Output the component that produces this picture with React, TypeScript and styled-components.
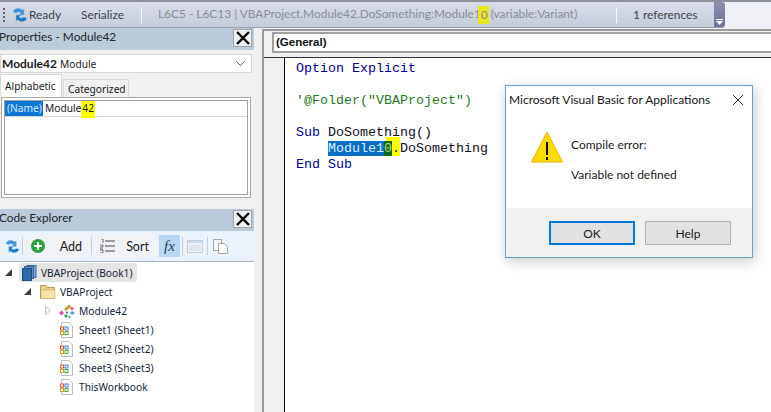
import React from 'react';
import styled, { createGlobalStyle } from 'styled-components';

const Global = createGlobalStyle`
  html, body { margin: 0; padding: 0; background: #f0f0f0; }
  * { box-sizing: border-box; }
`;
const Page = styled.div`
  position: relative; width: 771px; height: 412px; overflow: hidden;
  display: flex; flex-direction: column; background: #f0f0f0;
  font-family: Lato, "Noto Sans", sans-serif; font-size: 12px; color: #1a1a1a;
`;
const TopStrip = styled.div`
  height: 28px; flex: none; display: flex; background: #eef0f6;
  border-top: 2px solid #8d9099;
`;
const Toolbar = styled.div`
  width: 725px; display: flex; align-items: center; position: relative; font-size: 11.9px;
  background: linear-gradient(#d9deea, #cdd3e0 60%, #c6cdda);
  border-bottom: 1px solid #9aa0ab; border-radius: 0 3px 3px 0;
`;
const Grip = styled.div`
  width: 2px; height: 14px; margin: 0 6px 0 3px; flex: none;
  background: repeating-linear-gradient(#5c6370 0 2px, transparent 2px 4px);
`;
const ToolText = styled.span<{ $w: number; $muted?: boolean; $pad?: number }>`
  width: ${p => p.$w}px; flex: none; white-space: nowrap; padding-left: ${p => p.$pad ?? 0}px;
  color: ${p => (p.$muted ? '#8a8d94' : '#3f4248')};
`;
const Sep = styled.div`
  width: 1px; height: 16px; background: #f4f6fa; flex: none;
`;
const Hl = styled.span`
  background: #e9e81f; display: inline-block; height: 18px; line-height: 18px; margin-left: -3px; padding: 0 1px 0 3px;
  vertical-align: middle; margin-right: 2px;
`;
const Overflow = styled.div`
  position: absolute; right: 0; top: 0; bottom: 0; width: 11px;
  background: linear-gradient(#8d8fae, #6f7294); border-radius: 0 3px 3px 0;
  display: flex; align-items: flex-end; justify-content: center; padding-bottom: 2px;
`;
const Main = styled.div`
  flex: 1; display: flex; min-height: 0;
`;
const Left = styled.div`
  width: 254px; flex: none; display: flex; flex-direction: column;
`;
const PanelHead = styled.div`
  height: 22px; flex: none; background: #bccbd9; display: flex; align-items: flex-start;
  justify-content: space-between; padding: 1px 2px 0 0; overflow: hidden; font-size: 11.8px;
`;
const HeadTitle = styled.span`
  margin-left: -1px; color: #23262b; line-height: 15px;
`;
const CloseBtn = styled.div`
  width: 19px; height: 18px; background: #f0f0f0; border: 1px solid #9aa3ad;
  display: flex; align-items: center; justify-content: center;
`;
const Combo = styled.div`
  height: 19px; margin: 4px 2px 1px 0; background: #fff; border: 1px solid #d5d5d5;
  display: flex; align-items: center; justify-content: space-between; padding: 0 6px 0 1px;
`;
const ComboKind = styled.span`
  font-family: "Noto Sans", sans-serif; font-size: 10.2px;
`;
const Tabs = styled.div`
  display: flex; height: 23px; align-items: flex-end;
  font-family: "Noto Sans", sans-serif; font-size: 10.2px;
`;
const Tab = styled.div<{ $on?: boolean }>`
  height: ${p => (p.$on ? 23 : 18)}px; padding: 0 4px; display: flex; align-items: center;
  background: ${p => (p.$on ? '#fff' : '#f0f0f0')};
  border: 1px solid #d9d9d9; border-bottom: 0; margin-right: 1px;
  width: ${p => (p.$on ? 62 : 66)}px;
`;
const PropGrid = styled.div`
  height: 101px; flex: none; background: #fff; border: 1px solid #a9a9a9; margin-right: 3px;
  margin-left: 1px; padding: 2px;
`;
const PropInner = styled.div`
  height: 100%; border: 1px solid #a0a0a0;
`;
const PropRow = styled.div`
  display: flex; height: 16px; border-bottom: 1px solid #d8d8d8; line-height: 15px;
  font-family: "Noto Sans", sans-serif; font-size: 10.2px;
`;
const PropKey = styled.span`
  background: #0b78d7; color: #d7e9fa; width: 38px; padding-left: 2px; flex: none;
`;
const PropVal = styled.span`
  padding-left: 2px;
`;
const PropHl = styled.span`
  background: #ffff00; display: inline-block; padding: 0 1px; height: 17px;
`;
const Gap = styled.div`
  height: 11px; flex: none;
`;
const ExpToolbar = styled.div`
  height: 31px; flex: none; background: #eaf2fb; display: flex; align-items: center;
  border-bottom: 1px solid #a9b4c0; padding-left: 4px; font-size: 12.5px;
`;
const ToolGroup = styled.div<{ $w: number; $on?: boolean }>`
  width: ${p => p.$w}px; height: 22px; flex: none; display: flex; align-items: center;
  justify-content: space-between; padding: 0 7px 0 6px;
  background: ${p => (p.$on ? '#b9d7f5' : '#f0f2f6')};
`;
const FxBtn = styled(ToolGroup)`
  justify-content: center; padding: 0 2px; margin-left: 3px;
`;
const Fx = styled.i`
  font-family: "Liberation Serif", serif; font-size: 15px; color: #2b3a55;
`;
const ToolIcon = styled.div<{ $w: number }>`
  width: ${p => p.$w}px; height: 22px; flex: none; display: flex; align-items: center; justify-content: center;
`;
const VSep = styled.div`
  width: 1px; height: 18px; flex: none; background: #c9ced6; margin: 0 2px;
`;
const Tree = styled.div`
  flex: 1; background: #fff; padding-top: 1px; color: #152638;
  font-family: "Noto Sans", sans-serif; font-size: 10.2px;
`;
const TreeRow = styled.div<{ $indent: number }>`
  height: 19px; display: flex; align-items: center; padding-left: ${p => p.$indent}px; white-space: nowrap;
`;
const Tri = styled.span`
  width: 14px; flex: none; display: flex; align-items: center;
`;
const Selected = styled.div`
  display: flex; align-items: center; gap: 4px; background: #e4e4e4; border-radius: 3px;
  height: 19px; padding: 0 4px 0 3px;
`;
const RowIcon = styled.span`
  width: 16px; height: 16px; flex: none; margin-right: 4px; display: flex;
`;
const FolderIcon = styled(RowIcon)`
  margin-left: 2px;
`;
const SheetSlot = styled(RowIcon)`
  margin-right: 3px;
`;
const Split = styled.div`
  width: 8px; flex: none; background: #f0f0f0;
`;
const Right = styled.div`
  flex: 1; display: flex; flex-direction: column; padding-top: 1px; min-width: 0;
  border-top: 2px solid #9a9a9a; border-left: 2px solid #9a9a9a; margin-top: 1px;
`;
const GeneralBox = styled.div`
  margin-left: 8px; height: 21px; background: #fff; border: 2px solid #a0a0a0; border-right: 0;
  font-family: "Liberation Sans", Arial, sans-serif; font-weight: 700; font-size: 11.5px;
  display: flex; align-items: center; padding: 0 0 1px 2px; color: #111;
`;
const Editor = styled.div`
  margin-top: 4px; flex: 1; display: flex; border-top: 1px solid #333;
`;
const Margin = styled.div`
  width: 21px; flex: none; background: #f0f0f0; border-right: 1px solid #000;
`;
const Code = styled.pre`
  flex: 1; margin: 0; background: #fff; padding: 3px 0 0 11px;
  font-family: "Liberation Mono", "Courier New", monospace; font-size: 13.33px; line-height: 16px; color: #10101a;
`;
const Kw = styled.span`color: #00009a;`;
const Cm = styled.span`color: #1f7a1f;`;
const Sel = styled.span`background: #0a6fc2; color: #dbeeff;`;
const SelHl = styled.span`background: #0a6a10; color: #bcd6a0;`;
const DotHl = styled.span`background: #ffff00; color: #111;`;
const UnderHl = styled.span`position: relative; display: inline-block;
  &::before { content: ""; position: absolute; left: 2px; right: -8px; top: -4px; height: 4px; background: #ffff00; }
`;
const Dialog = styled.div`
  position: absolute; left: 505px; top: 85px; width: 248px; height: 173px; background: #fff;
  border: 1px solid #5fa2d8; box-shadow: 2px 3px 12px rgba(0,0,0,.22);
  display: flex; flex-direction: column;
`;
const DlgTitle = styled.div`
  height: 27px; flex: none; display: flex; align-items: center; justify-content: space-between;
  padding: 0 8px 0 3px; color: #161616;
`;
const DlgBody = styled.div`
  flex: 1; display: flex; padding: 18px 0 0 25px; gap: 8px;
`;
const DlgMsg = styled.div`
  padding-top: 6px; display: flex; flex-direction: column; gap: 15px;
`;
const DlgFoot = styled.div`
  height: 49px; flex: none; background: #f0f0f0; display: flex; padding: 13px 0 0 43px; gap: 10px;
`;
const DlgBtn = styled.div<{ $def?: boolean }>`
  width: 86px; height: 24px; background: #e1e1e1; display: flex; align-items: center; justify-content: center;
  border: ${p => (p.$def ? '2px solid #0078d7' : '1px solid #adadad')};
`;

const X = ({ s = 14, w = 2.4, c = '#000' }: { s?: number; w?: number; c?: string }) => (
  <svg width={s} height={s} viewBox="0 0 14 14"><path d="M1 1L13 13M13 1L1 13" stroke={c} strokeWidth={w} /></svg>
);
const Refresh = ({ s = 16 }: { s?: number }) => (
  <svg width={s} height={s} viewBox="0 0 16 16">
    <path d="M1 5a5 4 0 0 1 9-2l2-1v6H7l2-2a3 2 0 0 0-5 0z" fill="#3a8fd6" stroke="#8cc3ea" strokeWidth=".6" />
    <path d="M15 11a5 4 0 0 1-9 2l-2 1V8h5l-2 2a3 2 0 0 0 5 0z" fill="#1f76c4" stroke="#8cc3ea" strokeWidth=".6" />
  </svg>
);
const Triangle = ({ open }: { open?: boolean }) =>
  open ? (
    <svg width="7" height="7" viewBox="0 0 7 7"><path d="M7 0V7H0z" fill="#404040" /></svg>
  ) : (
    <svg width="6" height="9" viewBox="0 0 6 9"><path d="M.5.5L5.5 4.500L.5 8.500z" fill="#fff" stroke="#c0c0c0" /></svg>
  );
const SheetIcon = () => (
  <svg width="14" height="16" viewBox="0 0 14 16">
    <path d="M1.500.5H9L12.500 4V15.500H1.500z" fill="#fff" stroke="#bdbdbd" />
    <rect x="0.500" y="5" width="3" height="3" fill="#fff" stroke="#e0582a" />
    <rect x="5" y="5" width="3" height="3" fill="none" stroke="#3b7fd0" />
    <rect x="0.500" y="9.500" width="3" height="3" fill="#fff" stroke="#e09a20" />
    <rect x="5" y="9.500" width="3" height="3" fill="none" stroke="#52a83a" />
  </svg>
);

const sheets = ['Sheet1 (Sheet1)', 'Sheet2 (Sheet2)', 'Sheet3 (Sheet3)', 'ThisWorkbook'];

export default function App() {
  return (
    <Page>
      <Global />
      <TopStrip>
        <Toolbar>
          <Grip />
          <ToolIcon $w={17}><Refresh /></ToolIcon>
          <ToolText $w={53} $pad={1}>Ready</ToolText>
          <ToolText $w={60}>Serialize</ToolText>
          <Sep />
          <ToolText $w={474} $muted $pad={16}>
            L6C5 - L6C13 | VBAProject.Module42.DoSomething:Module1<Hl>0</Hl>(variable:Variant)
          </ToolText>
          <Sep />
          <ToolText $w={80} $pad={16}>1 references</ToolText>
          <Overflow>
            <svg width="7" height="6" viewBox="0 0 7 6"><path d="M0 0H7V1H0zM0 2H7L3.500 6z" fill="#fff" /></svg>
          </Overflow>
        </Toolbar>
      </TopStrip>
      <Main>
        <Left>
          <PanelHead>
            <HeadTitle>Properties - Module42</HeadTitle>
            <CloseBtn><X /></CloseBtn>
          </PanelHead>
          <Combo>
            <span><b>Module42</b> <ComboKind>Module</ComboKind></span>
            <svg width="9" height="5" viewBox="0 0 9 5"><path d="M.5.500L4.500 4.500L8.500.500" fill="none" stroke="#555" /></svg>
          </Combo>
          <Tabs>
            <Tab $on>Alphabetic</Tab>
            <Tab>Categorized</Tab>
          </Tabs>
          <PropGrid>
            <PropInner>
              <PropRow>
                <PropKey>(Name)</PropKey>
                <PropVal>Module<PropHl>42</PropHl></PropVal>
              </PropRow>
            </PropInner>
          </PropGrid>
          <Gap />
          <PanelHead>
            <HeadTitle>Code Explorer</HeadTitle>
            <CloseBtn><X /></CloseBtn>
          </PanelHead>
          <ExpToolbar>
            <ToolIcon $w={16}><Refresh s={15} /></ToolIcon>
            <VSep />
            <ToolGroup $w={64}>
              <svg width="14" height="14" viewBox="0 0 14 14">
                <circle cx="7" cy="7" r="7" fill="#27a33a" />
                <path d="M3 7H11M7 3V11" stroke="#fff" strokeWidth="2.200" />
              </svg>
              <span>Add</span>
            </ToolGroup>
            <VSep />
            <ToolGroup $w={62}>
              <svg width="15" height="14" viewBox="0 0 15 14">
                <path d="M5 2H15M5 7H15M5 12H15" stroke="#444" />
                <path d="M1 0H3V4M0 6H3V8H0V10H3M0 11H3V14H0" fill="none" stroke="#555" strokeWidth=".8" />
              </svg>
              <span>Sort</span>
            </ToolGroup>
            <FxBtn $w={21} $on>
              <Fx>fx</Fx>
            </FxBtn>
            <VSep />
            <ToolIcon $w={20}>
              <svg width="16" height="13" viewBox="0 0 16 13">
                <rect x=".5" y=".5" width="15" height="12" fill="#eef2f7" stroke="#c5ccd6" />
                <rect x="1" y="1" width="14" height="2" fill="#c8dcf0" />
                <path d="M2 6H14M2 8H14M2 10H14" stroke="#d5d9df" />
              </svg>
            </ToolIcon>
            <VSep />
            <ToolIcon $w={20}>
              <svg width="15" height="15" viewBox="0 0 15 15">
                <rect x=".5" y=".5" width="8" height="11" fill="#f4f4f4" stroke="#a8a8a8" />
                <path d="M5.500 4.500H11L14.500 7.500V14.500H5.500z" fill="#fff" stroke="#a8a8a8" />
              </svg>
            </ToolIcon>
          </ExpToolbar>
          <Tree>
            <TreeRow $indent={5}>
              <Tri><Triangle open /></Tri>
              <Selected>
                <svg width="15" height="16" viewBox="0 0 15 16">
                  <rect x="5" y="0.500" width="9" height="12" fill="#7fa6cf" stroke="#3f6b99" />
                  <rect x="2.500" y="1.500" width="9" height="12" fill="#5d8cc0" stroke="#3f6b99" />
                  <rect x="0.500" y="3.500" width="9" height="12" fill="#2f6aa8" stroke="#1f4c7c" />
                </svg>
                <span>VBAProject (Book1)</span>
              </Selected>
            </TreeRow>
            <TreeRow $indent={24}>
              <Tri><Triangle open /></Tri>
              <FolderIcon>
                <svg width="16" height="15" viewBox="0 0 16 15">
                  <path d="M.5 14.500V1.500H6L7.500 3.500H14.500V14.500z" fill="#e9cf8d" stroke="#bd9a4e" />
                  <path d="M1 14.500L1 6H15V14.500z" fill="#f6e3ae" stroke="#c8a761" strokeWidth=".6" />
                </svg>
              </FolderIcon>
              VBAProject
            </TreeRow>
            <TreeRow $indent={45}>
              <Tri><Triangle /></Tri>
              <RowIcon>
                <svg width="16" height="16" viewBox="0 0 16 16">
                  <path d="M5 6L10 1.500L12.500 3.500L7 8z" fill="#c9a33a" />
                  <path d="M0 10L2.500 7.500L5 10L2.500 12.500z" fill="#d94fa6" />
                  <path d="M11 5.500L13 3.500L15 5.500L13 7.500z" fill="#d94fa6" />
                  <path d="M5 13L7 11L9 13L7 15z" fill="#3aa63f" />
                  <path d="M11 10L13 8L16 10L13 12z" fill="#5a9be0" />
                  <path d="M9 14L10.500 12.500L12 14L10.500 15.500z" fill="#5a9be0" />
                  <circle cx="8" cy="9.500" r="1" fill="#555" />
                </svg>
              </RowIcon>
              Module42
            </TreeRow>
            {sheets.map(s => (
              <TreeRow $indent={60} key={s}>
                <SheetSlot><SheetIcon /></SheetSlot>
                {s}
              </TreeRow>
            ))}
          </Tree>
        </Left>
        <Split />
        <Right>
          <GeneralBox>(General)</GeneralBox>
          <Editor>
            <Margin />
            <Code>
              <Kw>Option Explicit</Kw>{'\n\n'}
              <Cm>'@Folder("VBAProject")</Cm>{'\n\n'}
              <Kw>Sub</Kw> DoSomething(){'\n'}
              {'    '}<Sel>Module1</Sel><UnderHl><SelHl>0</SelHl></UnderHl><DotHl>.</DotHl>DoSomething{'\n'}
              <Kw>End Sub</Kw>
            </Code>
          </Editor>
        </Right>
      </Main>
      <Dialog>
        <DlgTitle>
          <span>Microsoft Visual Basic for Applications</span>
          <X s={12} w={1} c="#222" />
        </DlgTitle>
        <DlgBody>
          <svg width="32" height="32" viewBox="0 0 32 32">
            <path d="M16 1L31.500 31H.5z" fill="#ffdc00" stroke="#f0b000" />
            <path d="M16 11V24M16 26V29" stroke="#111" strokeWidth="2" />
          </svg>
          <DlgMsg>
            <span>Compile error:</span>
            <span>Variable not defined</span>
          </DlgMsg>
        </DlgBody>
        <DlgFoot>
          <DlgBtn $def>OK</DlgBtn>
          <DlgBtn>Help</DlgBtn>
        </DlgFoot>
      </Dialog>
    </Page>
  );
}
